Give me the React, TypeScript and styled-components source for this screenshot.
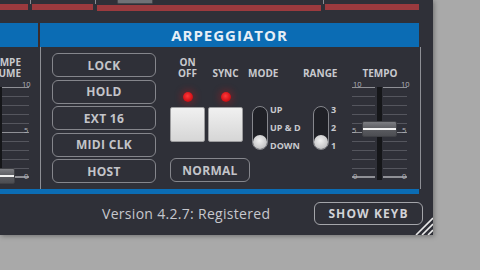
import React from 'react';
import styled, { createGlobalStyle } from 'styled-components';

const GlobalStyle = createGlobalStyle`
    html, body {
        margin: 0;
        padding: 0;
        background: #a9a9a9;
    }
    body {
        width: 480px;
        height: 270px;
        overflow: hidden;
        font-family: "Open Sans", "Noto Sans", sans-serif;
    }
`;

const Panel = styled.div`
    position: relative;
    width: 433px;
    height: 235px;
    background: #2f3038;
    box-shadow: 1px 1px 5px rgba(0, 0, 0, 0.35);
    display: flex;
    flex-direction: column;
    overflow: hidden;
`;

/* ---------- top strip (red bars of the section above) ---------- */

const TopStrip = styled.div`
    height: 23px;
    display: flex;
    align-items: flex-start;
`;

const TopCell = styled.div<{ $w: number; $divider?: boolean }>`
    width: ${p => p.$w}px;
    height: 100%;
    display: flex;
    flex-direction: column;
    background: ${p => p.$divider ? 'linear-gradient(#8c8d93, #8c8d93) left top / 1px 4px no-repeat' : 'none'};
`;

const RedBar = styled.div<{ $top: number }>`
    height: 6px;
    margin: ${p => p.$top}px 2px 0 2px;
    background: #9b3a3e;
    &.first { margin-left: 0; }
    &.last { margin-right: 1px; }
`;

const TopKnob = styled.div`
    width: 34px;
    height: 3px;
    margin-left: 22px;
    background: #707176;
    border: 1px solid #45464b;
    border-top: none;
    border-radius: 0 0 2px 2px;
`;

/* ---------- header ---------- */

const HeaderRow = styled.div`
    height: 24px;
    display: flex;
`;

const BlueBlock = styled.div<{ $w: number }>`
    width: ${p => p.$w}px;
    background: #0b6cb4;
    display: flex;
    align-items: center;
    justify-content: center;
`;

const HeaderDivider = styled.div`
    width: 2px;
    background: #3a2c2c;
`;

const Title = styled.span`
    color: #e6eef6;
    font-size: 15px;
    font-weight: 700;
    letter-spacing: 1px;
`;

/* ---------- body ---------- */

const Body = styled.div`
    height: 142px;
    display: flex;
`;

const LeftSection = styled.div`
    width: 40px;
    border-right: 1px solid #8e8f95;
    padding-top: 6px;
    display: flex;
    flex-direction: column;
    box-sizing: content-box;
`;

const LeftLabel = styled.div`
    width: 21px;
    height: 26px;
    display: flex;
    justify-content: flex-end;
    align-items: flex-end;
    overflow: hidden;
`;

const LabelText = styled.span`
    flex-shrink: 0;
    white-space: nowrap;
    color: #c8c9ce;
    font-size: 10px;
    font-weight: 700;
    line-height: 11px;
    text-align: right;
`;

const ArpArea = styled.div`
    width: 368px;
    border-right: 1px solid #8e8f95;
    padding: 6px 0 0 11px;
    display: flex;
    align-items: flex-start;
`;

const ButtonColumn = styled.div`
    width: 104px;
    display: flex;
    flex-direction: column;
    gap: 2.5px;
`;

const OutlineButton = styled.div<{ $w?: number; $h?: number }>`
    box-sizing: border-box;
    width: ${p => p.$w ? `${p.$w}px` : '100%'};
    height: ${p => p.$h ?? 24}px;
    border: 1.5px solid #85868c;
    border-radius: 6px;
    display: flex;
    align-items: center;
    justify-content: center;
    color: #c3c4c9;
    font-size: 12px;
    font-weight: 700;
    letter-spacing: 0.3px;
`;

const NormalButton = styled(OutlineButton)`
    margin-top: 16px;
`;

const PadGroup = styled.div`
    margin-left: 14px;
    width: 80px;
    display: flex;
    flex-direction: column;
`;

const PadRow = styled.div`
    display: flex;
    gap: 3px;
`;

const PadColumn = styled.div`
    width: 35px;
    display: flex;
    flex-direction: column;
`;

const ColLabel = styled.div<{ $shift?: number; $align?: string }>`
    height: 26px;
    display: flex;
    align-items: flex-end;
    justify-content: ${p => p.$align ?? 'center'};
    margin-left: ${p => p.$shift ?? 0}px;
    color: #c8c9ce;
    font-size: 10px;
    font-weight: 700;
    line-height: 11px;
    text-align: center;
    white-space: nowrap;
`;

const Led = styled.div`
    width: 10px;
    height: 10px;
    margin: 13px auto 5px auto;
    border-radius: 50%;
    background: radial-gradient(circle at 45% 40%, #ff3a3a 0%, #d8141a 55%, #8a1014 100%);
    box-shadow: 0 0 6px 3px rgba(200, 20, 30, 0.28);
`;

const Pad = styled.div`
    height: 35px;
    box-sizing: border-box;
    border: 1px solid #9c9c9e;
    border-radius: 2px;
    background: linear-gradient(#f0f0f0, #d6d6d6);
`;

const SwitchGroup = styled.div<{ $w: number }>`
    width: ${p => p.$w}px;
    display: flex;
    flex-direction: column;
`;

const SwitchRow = styled.div<{ $indent: number }>`
    margin-top: 27px;
    margin-left: ${p => p.$indent}px;
    display: flex;
`;

const Slot = styled.div`
    position: relative;
    width: 16px;
    height: 44px;
    box-sizing: border-box;
    border: 1px solid #86878d;
    border-radius: 8px;
    background: #1f2026;
`;

const SlotKnob = styled.div`
    position: absolute;
    left: 0;
    bottom: 0;
    width: 14px;
    height: 14px;
    border-radius: 50%;
    background: radial-gradient(circle at 45% 40%, #f0f0f0, #c4c4c6 70%, #9a9a9c);
`;

const SwitchLabels = styled.div`
    margin: -1px 0 0 2px;
    height: 46px;
    display: flex;
    flex-direction: column;
    justify-content: space-between;
`;

const SwitchLabel = styled.span`
    color: #c8c9ce;
    font-size: 9px;
    font-weight: 700;
    line-height: 10px;
    white-space: nowrap;
`;

/* ---------- sliders ---------- */

const Scale = styled.div<{ $w: number }>`
    position: relative;
    width: ${p => p.$w}px;
    height: 101px;
    display: flex;
    flex-direction: column;
`;

const NumberRow = styled.div`
    height: 8px;
`;

const TickRow = styled.div`
    height: 93px;
    display: flex;
`;

const bright = 'linear-gradient(#8f9096, #8f9096)';

const TickArea = styled.div<{ $w: number }>`
    width: ${p => p.$w}px;
    height: 91px;
    background:
        ${bright} 0 0 / 100% 1px no-repeat,
        ${bright} 0 45px / 100% 1px no-repeat,
        ${bright} 0 89px / 100% 2px no-repeat,
        repeating-linear-gradient(to bottom, #55565e 0 1px, transparent 1px 9px);
`;

const Track = styled.div<{ $w: number; $mx: number }>`
    width: ${p => p.$w}px;
    margin: 0 ${p => p.$mx}px;
    background: #151619;
`;

const Mark = styled.span<{ $x: number; $y: number }>`
    position: absolute;
    left: ${p => p.$x}px;
    top: ${p => p.$y}px;
    color: #b4b5ba;
    font-size: 7.5px;
    line-height: 8px;
`;

const Handle = styled.div<{ $x: number; $y: number; $w: number }>`
    position: absolute;
    left: ${p => p.$x}px;
    top: ${p => p.$y}px;
    width: ${p => p.$w}px;
    height: 16px;
    box-sizing: border-box;
    border: 1px solid #404146;
    border-radius: 2px;
    background: linear-gradient(#7d7e83, #5d5e63 45%, #4c4d52);
    display: flex;
    align-items: center;
    &::after {
        content: '';
        width: 100%;
        height: 2px;
        background: #f2f2f2;
    }
`;

const TempoGroup = styled.div`
    width: 60px;
    display: flex;
    flex-direction: column;
    align-items: center;
`;

/* ---------- bottom ---------- */

const BottomBar = styled.div`
    width: 419px;
    height: 5px;
    background: #0b6cb4;
`;

const Footer = styled.div`
    flex: 1;
    display: flex;
    align-items: center;
    padding: 0 10px 2px 102px;
`;

const Version = styled.span`
    color: #c6c7cd;
    font-size: 14px;
    letter-spacing: 0.3px;
`;

const KeybButton = styled(OutlineButton)`
    margin-left: auto;
    border-color: #a4a5aa;
    color: #d2d3d7;
    letter-spacing: 1.1px;
`;

const Grip = styled.svg`
    position: absolute;
    right: 0;
    bottom: 0;
`;

const modes = ['UP', 'UP & D', 'DOWN'];
const ranges = ['3', '2', '1'];
const sideButtons = ['LOCK', 'HOLD', 'EXT 16', 'MIDI CLK', 'HOST'];

// handle top inside a 101px scale, value 0..1
const handleTop = (v: number) => 84 * (1 - v);

function App() {
    const tempo = 0.5;

    return (
        <>
            <GlobalStyle />
            <Panel>
                <TopStrip>
                    <TopCell $w={30}><RedBar className='first' $top={4} /></TopCell>
                    <TopCell $w={65} $divider><RedBar $top={4} /></TopCell>
                    <TopCell $w={228} $divider>
                        <TopKnob />
                        <RedBar $top={1} />
                    </TopCell>
                    <TopCell $w={97} $divider><RedBar className='last' $top={4} /></TopCell>
                </TopStrip>

                <HeaderRow>
                    <BlueBlock $w={38} />
                    <HeaderDivider />
                    <BlueBlock $w={379}><Title>ARPEGGIATOR</Title></BlueBlock>
                </HeaderRow>

                <Body>
                    <LeftSection>
                        <LeftLabel><LabelText>AMPE<br />VOLUME</LabelText></LeftLabel>
                        <Scale $w={29}>
                            <NumberRow />
                            <TickRow>
                                <Track $w={2} $mx={0} />
                                <TickArea $w={27} />
                            </TickRow>
                            <Mark $x={22} $y={1}>10</Mark>
                            <Mark $x={24} $y={47}>5</Mark>
                            <Mark $x={24} $y={93}>0</Mark>
                            <Handle $x={-3} $y={89} $w={18} />
                        </Scale>
                    </LeftSection>

                    <ArpArea>
                        <ButtonColumn>
                            {sideButtons.map(b => <OutlineButton key={b}>{b}</OutlineButton>)}
                        </ButtonColumn>

                        <PadGroup>
                            <PadRow>
                                <PadColumn>
                                    <ColLabel>ON<br />OFF</ColLabel>
                                    <Led />
                                    <Pad />
                                </PadColumn>
                                <PadColumn>
                                    <ColLabel>SYNC</ColLabel>
                                    <Led />
                                    <Pad />
                                </PadColumn>
                            </PadRow>
                            <NormalButton $w={80}>NORMAL</NormalButton>
                        </PadGroup>

                        <SwitchGroup $w={52}>
                            <ColLabel $align='flex-start' $shift={-2}>MODE</ColLabel>
                            <SwitchRow $indent={2}>
                                <Slot><SlotKnob /></Slot>
                                <SwitchLabels>
                                    {modes.map(m => <SwitchLabel key={m}>{m}</SwitchLabel>)}
                                </SwitchLabels>
                            </SwitchRow>
                        </SwitchGroup>

                        <SwitchGroup $w={48}>
                            <ColLabel $align='flex-start' $shift={1}>RANGE</ColLabel>
                            <SwitchRow $indent={11}>
                                <Slot><SlotKnob /></Slot>
                                <SwitchLabels>
                                    {ranges.map(r => <SwitchLabel key={r}>{r}</SwitchLabel>)}
                                </SwitchLabels>
                            </SwitchRow>
                        </SwitchGroup>

                        <TempoGroup>
                            <ColLabel>TEMPO</ColLabel>
                            <Scale $w={56}>
                                <NumberRow />
                                <TickRow>
                                    <TickArea $w={23} />
                                    <Track $w={5} $mx={1.5} />
                                    <TickArea $w={24} />
                                </TickRow>
                                <Mark $x={1} $y={1}>10</Mark>
                                <Mark $x={49} $y={1}>10</Mark>
                                <Mark $x={0} $y={47}>5</Mark>
                                <Mark $x={50} $y={47}>5</Mark>
                                <Mark $x={1} $y={93}>0</Mark>
                                <Mark $x={50} $y={93}>0</Mark>
                                <Handle $x={10} $y={handleTop(tempo)} $w={35} />
                            </Scale>
                        </TempoGroup>
                    </ArpArea>
                </Body>

                <BottomBar />

                <Footer>
                    <Version>Version 4.2.7: Registered</Version>
                    <KeybButton $w={109} $h={23}>SHOW KEYB</KeybButton>
                </Footer>

                <Grip width="18" height="18" viewBox="0 0 18 18">
                    <path d="M1 18 L18 1 M7 18 L18 7 M13 18 L18 13" stroke="#e8e8e8" strokeWidth="1.6" />
                </Grip>
            </Panel>
        </>
    );
}

export default App;
